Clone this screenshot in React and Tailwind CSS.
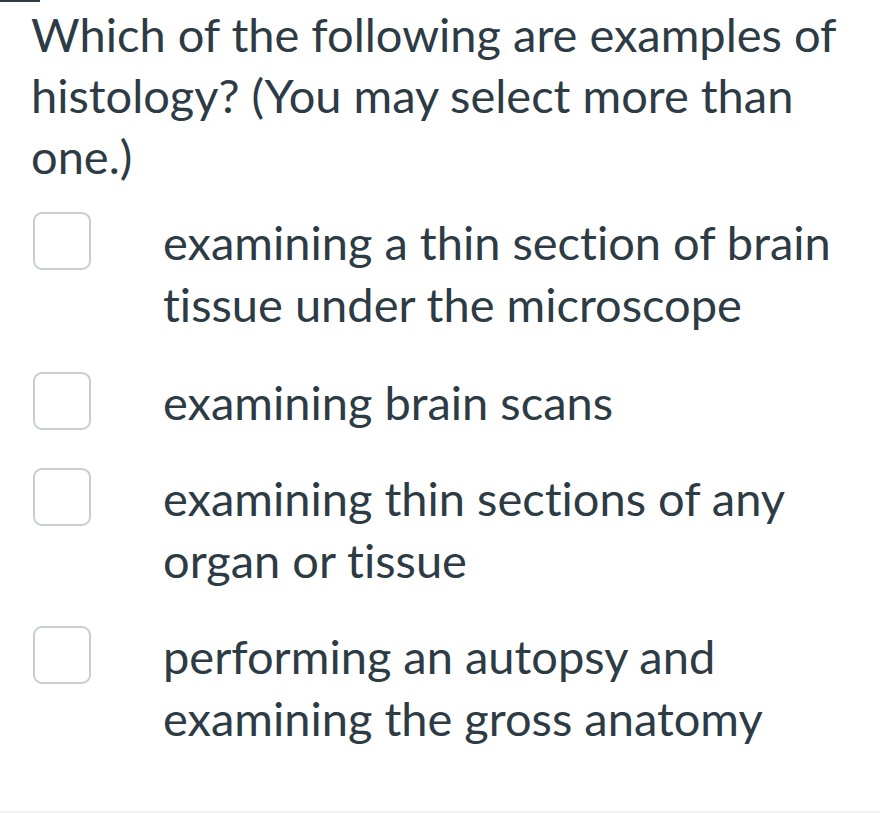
import React from "react";

const options = [
  "examining a thin section of brain tissue under the microscope",
  "examining brain scans",
  "examining thin sections of any organ or tissue",
  "performing an autopsy and examining the gross anatomy",
];

const App = () => {
  return (
    <div className="relative w-[880px] h-[813px] bg-white text-[#2d3b45] font-['Lato',sans-serif] [font-variant-ligatures:none] overflow-hidden">
      <div className="absolute left-0 top-0 w-[40px] h-[2px] bg-[#2d3b45]" />
      <div className="flex flex-col h-full border-b-2 border-[#f2f2f2]">
        <p className="pl-[31px] pr-[30px] pt-[4px] text-[47px] leading-[61px]">
          Which of the following are examples of histology? (You may select more than one.)
        </p>
        <div className="flex flex-col gap-[34px] mt-[24px] pl-[33px] pr-[30px]">
          {options.map((text, i) => (
            <label
              key={text}
              className={`flex items-start gap-[72px] ${i === 0 ? "mb-[2px]" : ""}`}
            >
              <span className="shrink-0 w-[58px] h-[58px] mt-[1px] rounded-[9px] border-2 border-[#c7cdd1] bg-white" />
              <span className="text-[47px] leading-[62px]">{text}</span>
            </label>
          ))}
        </div>
      </div>
    </div>
  );
};

export default App;
